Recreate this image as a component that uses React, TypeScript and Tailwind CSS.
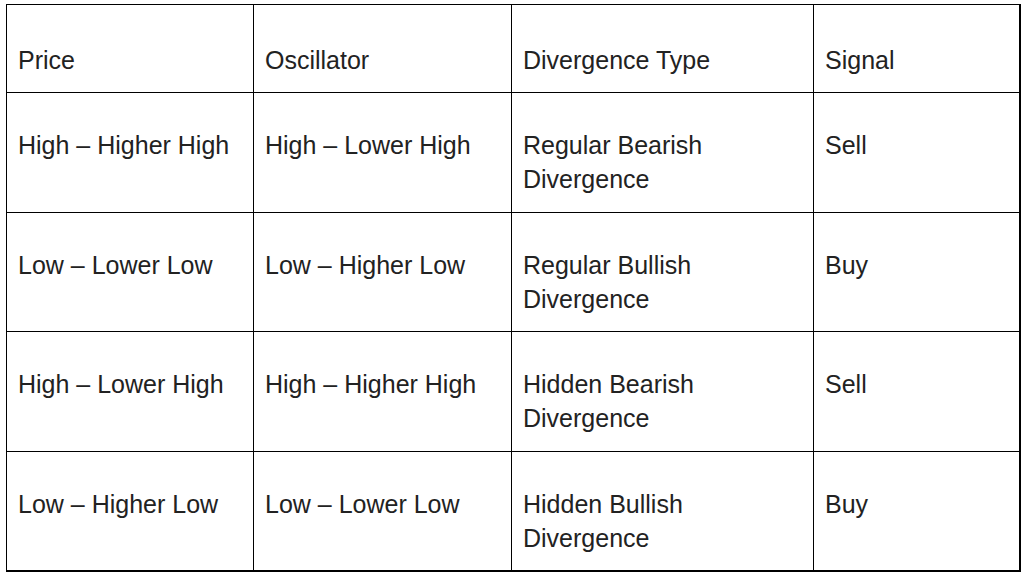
const rows: string[][] = [
  ["Price", "Oscillator", "Divergence Type", "Signal"],
  ["High – Higher High", "High – Lower High", "Regular Bearish Divergence", "Sell"],
  ["Low – Lower Low", "Low – Higher Low", "Regular Bullish Divergence", "Buy"],
  ["High – Lower High", "High – Higher High", "Hidden Bearish Divergence", "Sell"],
  ["Low – Higher Low", "Low – Lower Low", "Hidden Bullish Divergence", "Buy"],
];

// row heights measured from the screenshot, border included
const rowHeights = ["h-[88px]", "h-[120px]", "h-[119px]", "h-[120px]", "h-[121px]"];
const colWidths = ["w-[247px]", "w-[258px]", "w-[302px]", "w-[208px]"];

export default function App() {
  return (
    <div className="min-h-[575px] w-[1024px] bg-white pl-[6px] pt-[4px] font-['Liberation_Sans',Arial,sans-serif] text-[25px] leading-[34px] text-[#222]">
      <div className="flex flex-col">
        {rows.map((row, r) => (
          <div key={r} className="flex">
            {row.map((cell, c) => (
              <div
                key={c}
                className={[
                  colWidths[c],
                  rowHeights[r],
                  "border-l border-t border-black pl-[11px] pr-3",
                  r === 0 ? "pt-[38px]" : "pt-[35px]",
                  c === 3 ? "border-r-2" : "",
                  r === rows.length - 1 ? "border-b-2" : "",
                ].join(" ")}
              >
                {cell}
              </div>
            ))}
          </div>
        ))}
      </div>
    </div>
  );
}
